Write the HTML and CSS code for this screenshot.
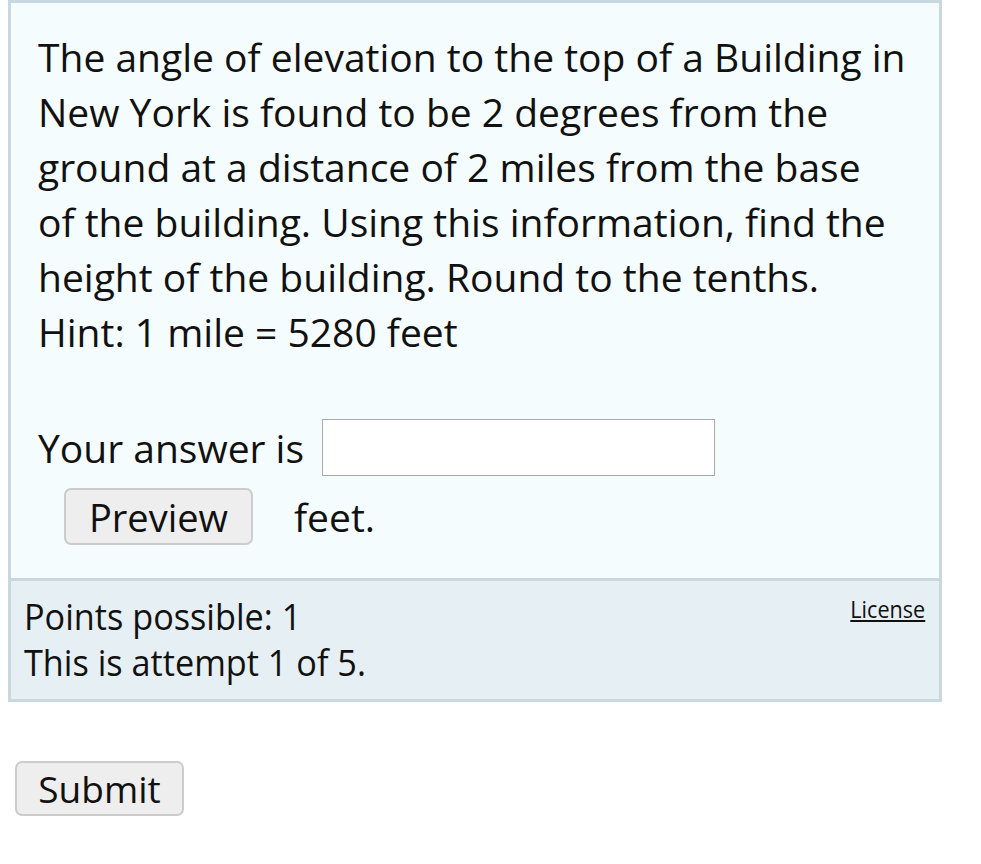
FILE: index.html
```html
<!DOCTYPE html>
<html>
<head>
<meta charset="utf-8">
<link rel="stylesheet" href="styles.css">
</head>
<body>
<div class="question-wrap">
  <div class="question">
    <p class="text">The angle of elevation to the top of a Building in New York is found to be 2 degrees from the ground at a distance of 2 miles from the base of the building. Using this information, find the height of the building. Round to the tenths.<br>Hint: 1 mile = 5280 feet</p>
    <div class="answer-row">
      <span class="label">Your answer is</span>
      <input class="answer" type="text">
    </div>
    <div class="preview-row">
      <button class="btn preview">Preview</button>
      <span class="unit">feet.</span>
    </div>
  </div>
  <div class="footer">
    <div class="info">
      <div class="line">Points possible: 1</div>
      <div class="line">This is attempt 1 of 5.</div>
    </div>
    <a class="license" href="#">License</a>
  </div>
</div>
<div class="submit-row">
  <button class="btn submit">Submit</button>
</div>
</body>
</html>
```
FILE: styles.css
```css
html, body {
  margin: 0;
  padding: 0;
  background: #fff;
}
body {
  font-family: "Open Sans", "DejaVu Sans", sans-serif;
  color: #111;
  padding: 0 0 0 8px;
}
.question-wrap {
  width: 934px;
  border: 3px solid #c8d8de;
  box-sizing: border-box;
}
.question {
  background: #f5fcfd;
  padding: 26px 33px 33px 27px;
  border-bottom: 3px solid #c8d8de;
}
.text {
  margin: 0;
  font-size: 39px;
  line-height: 55px;
}
.answer-row {
  display: flex;
  align-items: center;
  margin-top: 60px;
  font-size: 39px;
}
.label {
  margin-right: 18px;
}
.answer {
  width: 393px;
  height: 57px;
  box-sizing: border-box;
  border: 1px solid #aaa;
  background: #fff;
  margin: 0;
  padding: 0;
}
.preview-row {
  display: flex;
  align-items: center;
  margin-top: 12px;
  padding-left: 26px;
  font-size: 39px;
}
.btn {
  font-family: "Open Sans", "DejaVu Sans", sans-serif;
  color: #111;
  background: #eeeeee;
  border: 2px solid #cccccc;
  border-radius: 7px;
  padding: 0;
  box-sizing: border-box;
}
.preview {
  width: 189px;
  height: 57px;
  font-size: 38px;
}
.unit {
  margin-left: 41px;
}
.footer {
  background: #e6eff3;
  display: flex;
  justify-content: space-between;
  align-items: flex-start;
  padding: 12px 14px 14px 13px;
}
.info {
  font-size: 37px;
  line-height: 46px;
}
.line {
  transform: scaleX(0.925);
  transform-origin: left center;
  white-space: nowrap;
}
.license {
  color: #111;
  font-size: 24px;
  margin-top: -1px;
  display: inline-block;
  transform: scaleX(0.9);
  transform-origin: right center;
}
.submit-row {
  padding: 59px 0 0 7px;
}
.submit {
  width: 169px;
  height: 55px;
  font-size: 37px;
}
```
